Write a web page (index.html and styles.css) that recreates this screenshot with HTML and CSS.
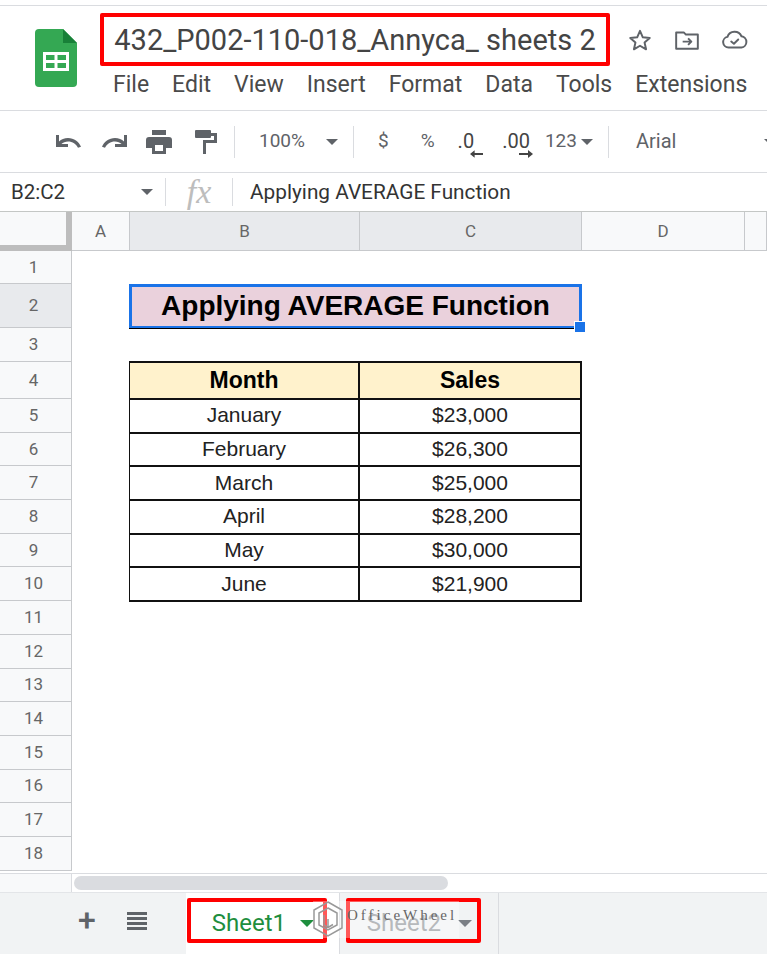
FILE: index.html
```html
<!DOCTYPE html>
<html lang="en">

<head>
    <meta charset="UTF-8">
    <title>432_P002-110-018_Annyca_ sheets 2</title>
    <link rel="stylesheet" href="styles.css">
</head>

<body>
    <header class="titlebar">
        <svg class="logo" width="42" height="58" viewBox="0 0 42 58">
            <path d="M4 0H28L42 14V54a4 4 0 0 1-4 4H4a4 4 0 0 1-4-4V4a4 4 0 0 1 4-4Z" fill="#34a853" />
            <path d="M28 0L42 14H28Z" fill="#188038" />
            <path d="M8 23H34V42H8Z M11 26V31H19.5V26Z M22.5 26V31H31V26Z M11 34V39H19.5V34Z M22.5 34V39H31V34Z" fill="#fff" fill-rule="evenodd" />
        </svg>
        <div class="titlebar-main">
            <div class="title-row">
                <div class="doc-title">432_P002-110-018_Annyca_ sheets 2</div>
                <div class="title-icons">
                    <svg width="26" height="26" viewBox="0 0 24 24" fill="none" stroke="#5f6368" stroke-width="1.8" stroke-linejoin="round">
                        <path d="M12 3.5l2.6 6 6.4.6-4.8 4.2 1.4 6.3L12 17.3l-5.6 3.3 1.4-6.3L3 10.1l6.4-.6Z" />
                    </svg>
                    <svg width="26" height="26" viewBox="0 0 24 24" fill="none" stroke="#5f6368" stroke-width="1.8" stroke-linejoin="round">
                        <path d="M2 5h7l2 2h11v13H2Z" />
                        <path d="M8 13.5h8M13 10.5l3 3-3 3" />
                    </svg>
                    <svg width="28" height="26" viewBox="0 0 26 24" fill="none" stroke="#5f6368" stroke-width="1.8" stroke-linejoin="round">
                        <path d="M7 19a5 5 0 0 1-1-9.9A7 7 0 0 1 19 8.5a5.3 5.3 0 0 1 0 10.5Z" />
                        <path d="M9.5 13.5l2.5 2 4-4" stroke-linecap="round" />
                    </svg>
                </div>
            </div>
            <nav class="menu">
                <span>File</span><span>Edit</span><span>View</span><span>Insert</span><span>Format</span><span>Data</span><span>Tools</span><span>Extensions</span>
            </nav>
        </div>
    </header>

    <div class="toolbar">
        <svg class="tool-icon" width="28" height="20" viewBox="0 0 28 20"><path d="M13 6c-3.6 0-6.8 1.3-9 3.5V3H1v12h12v-3H6.4C8 10.5 10.4 9.4 13 9.4c4.5 0 8.3 2.6 10 6.4l3-1C24 9.5 19 6 13 6Z" /></svg>
        <svg class="tool-icon" width="28" height="20" viewBox="0 0 28 20"><path d="M15 6c3.6 0 6.8 1.3 9 3.5V3h3v12H15v-3h6.6C20 10.5 17.6 9.4 15 9.4c-4.5 0-8.3 2.6-10 6.4l-3-1C4 9.5 9 6 15 6Z" /></svg>
        <svg class="tool-icon print" width="28" height="24" viewBox="0 0 28 24"><path d="M7 0H21V5H7Z M4 7H24a3 3 0 0 1 3 3V18H21V24H7V18H1V10a3 3 0 0 1 3-3Z M10 15V21H18V15Z" fill-rule="evenodd" /></svg>
        <svg class="tool-icon" width="22" height="24" viewBox="0 0 22 24"><path d="M1 0H15a1 1 0 0 1 1 1V7a1 1 0 0 1-1 1H1a1 1 0 0 1-1-1V1a1 1 0 0 1 1-1Z M16 3H22V13H11V24H8V10H19V6H16Z" /></svg>
        <i class="sep"></i>
        <span class="tool-text zoom-level">100%</span>
        <i class="caret zoom-caret"></i>
        <i class="sep"></i>
        <span class="tool-text dollar">$</span>
        <span class="tool-text percent">%</span>
        <span class="tool-text dec dec-less">.0<svg width="13" height="8" viewBox="0 0 14 8"><path d="M0 4L5 0V3H14V5H5V8Z" /></svg></span>
        <span class="tool-text dec dec-more">.00<svg width="14" height="8" viewBox="0 0 14 8"><path d="M14 4L9 0V3H0V5H9V8Z" /></svg></span>
        <span class="tool-text num">123</span>
        <i class="caret num-caret"></i>
        <i class="sep"></i>
        <span class="tool-text font-name">Arial</span>
        <i class="caret"></i>
    </div>

    <div class="formula-bar">
        <span class="name-box">B2:C2</span>
        <i class="caret name-caret"></i>
        <i class="fsep"></i>
        <span class="fx">fx</span>
        <i class="fsep"></i>
        <span class="formula">Applying AVERAGE Function</span>
    </div>

    <main class="sheet">
        <div class="corner"></div>
        <div class="col">A</div>
        <div class="col picked">B</div>
        <div class="col picked">C</div>
        <div class="col">D</div>
        <div class="col"></div>

        <div class="row">1</div>
        <div class="row picked">2</div>
        <div class="title-cell">Applying AVERAGE Function<i class="handle"></i></div>
        <div class="row">3</div>
        <div class="row">4</div>
        <div class="cell head b">Month</div>
        <div class="cell head c">Sales</div>
        <div class="row">5</div>
        <div class="cell b">January</div>
        <div class="cell c">$23,000</div>
        <div class="row">6</div>
        <div class="cell b">February</div>
        <div class="cell c">$26,300</div>
        <div class="row">7</div>
        <div class="cell b">March</div>
        <div class="cell c">$25,000</div>
        <div class="row">8</div>
        <div class="cell b">April</div>
        <div class="cell c">$28,200</div>
        <div class="row">9</div>
        <div class="cell b">May</div>
        <div class="cell c">$30,000</div>
        <div class="row">10</div>
        <div class="cell b">June</div>
        <div class="cell c">$21,900</div>
        <div class="row">11</div>
        <div class="row">12</div>
        <div class="row">13</div>
        <div class="row">14</div>
        <div class="row">15</div>
        <div class="row">16</div>
        <div class="row">17</div>
        <div class="row">18</div>
    </main>

    <div class="scroll-row">
        <div class="scroll-gutter"></div>
        <div class="scroll-thumb"></div>
    </div>

    <footer class="tabs">
        <span class="add">+</span>
        <svg class="all-sheets" width="20" height="18" viewBox="0 0 20 18"><path d="M0 0H20V3H0Z M0 5H20V8H0Z M0 10H20V13H0Z M0 15H20V18H0Z" fill="#5f6368" /></svg>
        <div class="tab active"><div class="tab-mark">Sheet1<i class="caret green"></i></div></div>
        <div class="tab other"><div class="tab-mark">Sheet2<i class="caret"></i></div></div>
        <div class="watermark">
            <svg width="30" height="36" viewBox="0 0 30 36" fill="none" stroke="#999" stroke-width="1.5">
                <path d="M15 1L29 9V27L15 35L1 27V9Z" />
                <path d="M15 7L24 12V24L15 29L6 24V12Z" />
                <path d="M11 14V24L15 26.5L20 23.5M15 18V26.5" />
            </svg>
            <span>OfficeWheel</span>
        </div>
    </footer>
</body>

</html>
```

FILE: styles.css
```css
html,
body {
    margin: 0;
    height: 100%;
    overflow: hidden;
}

body {
    width: 767px;
    height: 954px;
    display: flex;
    flex-direction: column;
    background: #fff;
    font-family: Roboto, sans-serif;
    color: #3c4043;
}

.titlebar {
    margin-top: 5px;
    height: 104px;
    flex: none;
    display: flex;
    border-top: 1px solid #dadce0;
    border-bottom: 1px solid #dadce0;
}

.logo {
    margin: 23px 0 0 35px;
}

.titlebar-main {
    margin-left: 23px;
    flex: 1;
}

.title-row {
    display: flex;
    margin-top: 7px;
}

.doc-title {
    width: 502px;
    height: 45px;
    border: 4px solid #f00;
    border-radius: 2px;
    font-size: 29px;
    line-height: 47px;
    text-align: center;
    color: #444;
    white-space: nowrap;
}

.title-icons {
    display: flex;
    gap: 21px;
    margin: 14px 0 0 17px;
}

.menu {
    display: flex;
    gap: 23px;
    margin: 5px 0 0 13px;
    font-size: 23px;
    color: #4a4a4a;
}

.toolbar {
    height: 61px;
    flex: none;
    display: flex;
    align-items: center;
    padding-left: 55px;
    border-bottom: 1px solid #dadce0;
}

.tool-icon {
    fill: #5f6368;
    flex: none;
    margin-right: 17px;
}

.print {
    margin-right: 22px;
}

.sep {
    flex: none;
    width: 1px;
    height: 32px;
    background: #dadce0;
    margin-right: 18px;
}

.tool-text {
    flex: none;
    margin-bottom: 2px;
    font-size: 19px;
    color: #5f6368;
}

.zoom-level {
    width: 48px;
    margin-left: 6px;
}

.zoom-caret {
    margin: 0 15px 0 19px;
}

.dollar {
    margin: 0 32px 2px 6px;
}

.percent {
    margin-right: 23px;
}

.dec {
    position: relative;
    font-size: 20px;
    color: #444;
}

.dec svg {
    position: absolute;
    bottom: -5px;
    fill: #444;
}

.dec-less {
    margin-right: 28px;
}

.dec-less svg {
    right: -9px;
}

.dec-more {
    margin-right: 15px;
}

.dec-more svg {
    right: -3px;
}

.num-caret {
    margin: 0 15px 0 4px;
}

.font-name {
    margin-left: 9px;
    width: 128px;
    font-size: 20px;
}

.caret {
    display: inline-block;
    flex: none;
    width: 0;
    height: 0;
    border: 6px solid transparent;
    border-top-color: #5f6368;
    border-bottom-width: 0;
}

.formula-bar {
    height: 38px;
    flex: none;
    display: flex;
    align-items: center;
    border-bottom: 1px solid #c4c7c5;
    font-size: 20.8px;
    color: #333;
}

.name-box {
    width: 130px;
    padding-left: 11px;
    font-size: 20.5px;
}

.name-caret {
    margin-right: 12px;
}

.fsep {
    width: 1px;
    height: 28px;
    background: #dadce0;
}

.fx {
    width: 66px;
    text-align: center;
    font-family: "Liberation Serif", serif;
    font-style: italic;
    font-size: 34px;
    color: #bdbdbd;
}

.formula {
    margin-left: 17px;
}

.sheet {
    height: 661px;
    flex: none;
    display: grid;
    grid-template-columns: 72px 58px 230px 222px 163px 22px;
    grid-template-rows: 39px 33px 44px 34px 37px repeat(14, 33.7px);
    align-content: start;
}

.corner,
.col,
.row {
    display: flex;
    align-items: center;
    justify-content: center;
    box-sizing: border-box;
    background: #f8f9fa;
    border-right: 1px solid #c7c9cc;
    border-bottom: 1px solid #c7c9cc;
    color: #666;
    font-size: 17px;
}

.corner {
    grid-column: 1;
    border-right: 6px solid #bdbdbd;
    border-bottom: 6px solid #bdbdbd;
}

.row {
    grid-column: 1;
    padding: 0 4px 1px 0;
}

.col.picked,
.row.picked {
    background: #e8eaed;
}

.title-cell {
    grid-column: 3 / 5;
    margin-left: -1px;
    position: relative;
    display: flex;
    align-items: center;
    justify-content: center;
    box-sizing: border-box;
    padding-bottom: 2px;
    background: #ead1dc;
    border: 3px solid #1a73e8;
    border-bottom-width: 2px;
    box-shadow: 0 1px 0 #000;
    font-family: "Liberation Sans", sans-serif;
    font-weight: bold;
    font-size: 28px;
    color: #000;
}

.handle {
    position: absolute;
    right: -7px;
    bottom: -7px;
    width: 10px;
    height: 10px;
    background: #1a73e8;
    border: 1px solid #fff;
}

.cell {
    display: flex;
    align-items: center;
    justify-content: center;
    box-sizing: border-box;
    margin-bottom: -1px;
    border-right: 2px solid #111;
    border-bottom: 2px solid #111;
    font-family: "Liberation Sans", sans-serif;
    font-size: 21px;
    color: #222;
}

.cell.b {
    grid-column: 3;
    box-shadow: -1px 0 0 #111;
}

.cell.c {
    grid-column: 4;
}

.cell.head {
    margin-top: -1px;
    background: #fff2cc;
    border-top: 2px solid #111;
    font-weight: bold;
    font-size: 23px;
    color: #000;
}

.scroll-row {
    flex: 1;
    display: flex;
    align-items: center;
    border-top: 1px solid #dadce0;
}

.scroll-gutter {
    width: 72px;
    height: 100%;
    box-sizing: border-box;
    border-right: 1px solid #dadce0;
    background: #f8f9fa;
}

.scroll-thumb {
    width: 374px;
    height: 14px;
    margin-left: 2px;
    border-radius: 7px;
    background: #dadce0;
}

.tabs {
    height: 62px;
    flex: none;
    position: relative;
    display: flex;
    background: #f1f3f4;
    border-top: 1px solid #e3e5e8;
    box-sizing: border-box;
}

.add {
    margin: 8px 0 0 78px;
    font-size: 32px;
    font-weight: 500;
    color: #5f6368;
}

.all-sheets {
    margin: 19px 39px 0 31px;
}

.tab {
    box-sizing: border-box;
    padding-top: 5px;
    border-right: 1px solid #dadce0;
}

.tab.active {
    width: 154px;
    padding-left: 1px;
    background: #fff;
}

.tab.other {
    width: 159px;
    padding-left: 6px;
}

.tab-mark {
    height: 45px;
    box-sizing: border-box;
    display: flex;
    align-items: center;
    gap: 14px;
    padding: 5px 0 0 17px;
    border: 4px solid #f00;
    border-radius: 2px;
    font-size: 24px;
    color: #8f9499;
}

.active .tab-mark {
    width: 140px;
    padding-left: 21px;
    color: #1e8e3e;
}

.other .tab-mark {
    width: 135px;
    gap: 17px;
}

.tab-mark .caret {
    border-width: 7px 7px 0;
    border-top-color: #7a7f85;
}

.tab-mark .caret.green {
    border-top-color: #1e8e3e;
}

.watermark {
    position: absolute;
    left: 313px;
    top: 8px;
    display: flex;
    align-items: center;
    gap: 4px;
    padding-bottom: 1px;
    background: rgba(255, 255, 255, 0.35);
    font-family: "Liberation Serif", serif;
    font-size: 15px;
    letter-spacing: 3px;
    color: #666;
}

.watermark span {
    padding: 0 2px 7px 0;
}
```
